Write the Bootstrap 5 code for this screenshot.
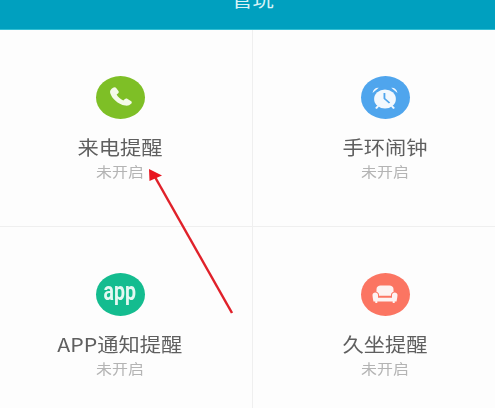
<!DOCTYPE html>
<html lang="zh">
<head>
<meta charset="utf-8">
<title>提醒</title>
<link href="https://cdn.jsdelivr.net/npm/bootstrap@5.3.0/dist/css/bootstrap.min.css" rel="stylesheet">
<style>
html,body{height:408px;overflow:hidden;margin:0;background:#fdfdfd;}
body{font-family:"Noto Sans CJK SC","Liberation Sans",sans-serif;position:relative;}
.page-wrap{filter:blur(.6px);height:408px;}
.top-bar{height:30px;background:#00a0bf;border-bottom:1px solid #33bfd3;overflow:hidden;color:#d8f3f7;font-size:19px;line-height:20px;text-align:center;padding-left:10px;}
.top-bar span{display:block;margin-top:-11px;transform:scaleX(1.12);}
.tile-grid{display:grid;grid-template-columns:252px 1fr;grid-template-rows:196px 1fr;height:378px;}
.tile{display:flex;flex-direction:column;align-items:center;padding-top:46px;padding-right:12px;}
.tile-r{border-left:1px solid #efefef;padding-right:0;padding-left:22px;}
.tile-b{border-top:1px solid #efefef;}
.disc{width:49px;height:43px;border-radius:50%;display:flex;align-items:center;justify-content:center;}
.tile-name{font-size:19px;line-height:28px;color:#5f5f5f;margin-top:14px;white-space:nowrap;transform:scaleX(1.12);}
.tile-state{font-size:14px;line-height:20px;color:#b4b4b4;transform:scaleX(1.14);}
.arrow-over{position:absolute;left:0;top:0;pointer-events:none;}
.app-word{font-family:"Roboto","Liberation Sans",sans-serif;font-weight:700;font-size:25px;line-height:25px;color:#e4f8f2;transform:scaleX(.78);margin-top:-6px;}
</style>
</head>
<body>
<div class="page-wrap">
<div class="top-bar"><span>管玩</span></div>
<div class="tile-grid">
<div class="tile">
<div class="disc" style="background:#7ebf26"><svg width="31" height="27" viewBox="0 0 24 24" preserveAspectRatio="none"><path fill="#f4fae8" d="M6.200 3.400c1-.8 2-.6 2.600.3l1.600 2.600c.5.800.3 1.600-.4 2.200l-1 .9c.9 2 2.800 4 5.200 5.200l1-1c.7-.7 1.500-.8 2.300-.3l2.500 1.700c.9.600 1 1.700.2 2.600-1.200 1.400-2.800 2-4.500 1.600C9.800 17.600 5.400 13 4 7.900c-.4-1.800.6-3.400 2.200-4.500z"/></svg></div>
<div class="tile-name">来电提醒</div>
<div class="tile-state">未开启</div>
</div>
<div class="tile tile-r">
<div class="disc" style="background:#4fa5ed"><svg width="34" height="30" viewBox="0 0 30 30" preserveAspectRatio="none"><circle cx="15" cy="16" r="9.600" fill="#f2f8fe"/><path d="M14.500 10V15.500L19 20" fill="none" stroke="#4fa5ed" stroke-width="1.600"/><path fill="#f2f8fe" d="M4 10C4.500 6.500 6.500 4.500 9.500 4.800zM26 10C25.500 6.500 23.500 4.500 20.500 4.800z"/><path stroke="#f2f8fe" stroke-width="2" d="M9 23l-2 2.500M21 23l2 2.500"/></svg></div>
<div class="tile-name">手环闹钟</div>
<div class="tile-state">未开启</div>
</div>
<div class="tile tile-b">
<div class="disc" style="background:#14bc8f"><span class="app-word">app</span></div>
<div class="tile-name">APP通知提醒</div>
<div class="tile-state">未开启</div>
</div>
<div class="tile tile-r tile-b">
<div class="disc" style="background:#fb7562"><svg width="28" height="24" viewBox="0 0 28 24"><path fill="#fdf3f2" d="M5.500 6C5.500 3.800 7.500 2.500 9.500 2.500h9c2 0 4 1.300 4 3.500V9c-1.500.3-2.500 1.300-2.500 2.800v1H8v-1C8 10.300 7 9.300 5.500 9z"/><path fill="#fdf3f2" d="M1.500 12c0-1.500 1.200-2.500 2.800-2.500S7 10.500 7 12v2.800h14V12c0-1.500 1.200-2.500 2.700-2.500s2.800 1 2.800 2.500c0 1.500-.5 4-1 6.500h-1.800V20h-2v-1.500H6.300V20h-2v-1.500H2.500c-.5-2.500-1-5-1-6.500z"/></svg></div>
<div class="tile-name">久坐提醒</div>
<div class="tile-state">未开启</div>
</div>
</div>
</div>
<svg class="arrow-over" width="495" height="408"><line x1="232" y1="313" x2="155" y2="177" stroke="#e0212a" stroke-width="2.500"/><path d="M149 169l13 6.500-12.500 5.500z" fill="#e8141e"/></svg>
</body>
</html>
